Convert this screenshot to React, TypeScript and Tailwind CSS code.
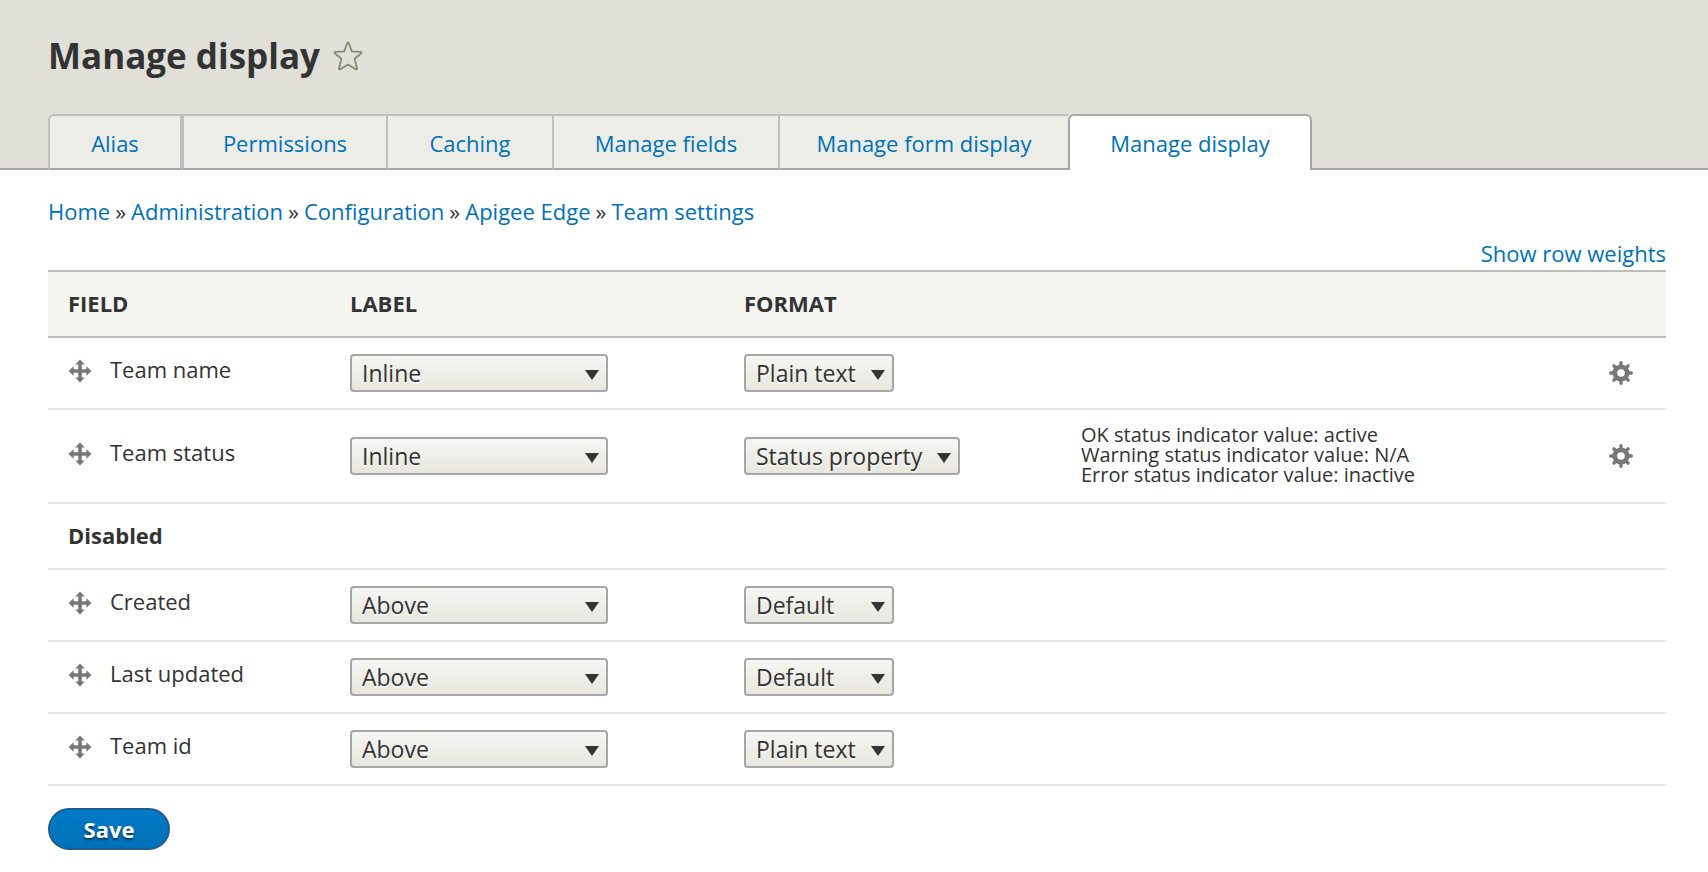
import React, { useState } from 'react';
import clsx from 'clsx';

type Row = {
  id: string;
  name: string;
  label: string;
  format: string;
  wide?: boolean;
  summary?: string[];
  configurable?: boolean;
};

const tabs = [
  { name: 'Alias', className: 'w-[134px] rounded-tl-md border-x-2' },
  { name: 'Permissions', className: 'w-[206px] border-x-2' },
  { name: 'Caching', className: 'w-[166px] border-r-2' },
  { name: 'Manage fields', className: 'w-[226px] border-r-2' },
  { name: 'Manage form display', className: 'w-[288px]' },
];

const crumbs = ['Home', 'Administration', 'Configuration', 'Apigee Edge', 'Team settings'];

const labelOptions = ['Above', 'Inline', 'Hidden', 'Visually Hidden'];
const formatOptions = ['Default', 'Plain text', 'Status property'];

const enabledRows: Row[] = [
  { id: 'name', name: 'Team name', label: 'Inline', format: 'Plain text', configurable: true },
  {
    id: 'status',
    name: 'Team status',
    label: 'Inline',
    format: 'Status property',
    wide: true,
    configurable: true,
    summary: [
      'OK status indicator value: active',
      'Warning status indicator value: N/A',
      'Error status indicator value: inactive',
    ],
  },
];

const disabledRows: Row[] = [
  { id: 'created', name: 'Created', label: 'Above', format: 'Default' },
  { id: 'changed', name: 'Last updated', label: 'Above', format: 'Default' },
  { id: 'team-id', name: 'Team id', label: 'Above', format: 'Plain text' },
];

const linkClass = 'text-[#0071b8] hover:underline';

const StarIcon = () => (
  <svg viewBox="0 0 30 30" className="size-[30px]" fill="none" stroke="#8a8774" strokeWidth="1.8" strokeLinejoin="round" aria-hidden="true">
    <path d="M14.2 2.2Q15 .6 15.8 2.2L18.8 10.4 27.6 10.9Q29.2 11.2 28.1 12.4L21.6 17.8 23.9 27.2Q24 29 22.5 28.3L15 23.6 7.5 28.3Q6 29 6.1 27.2L8.4 17.8 1.9 12.4Q.8 11.2 2.4 10.9L11.2 10.4Z" />
  </svg>
);

const MoveIcon = () => (
  <svg viewBox="0 0 24 24" className="size-6" fill="#787878" aria-hidden="true">
    <path d="M12 .5 16.8 5.6H13.8V10.2H18.4V7.2L23.5 12 18.4 16.8V13.8H13.8V18.4H16.8L12 23.5 7.2 18.4H10.2V13.8H5.6V16.8L.5 12 5.6 7.2V10.2H10.2V5.6H7.2Z" />
  </svg>
);

const GearIcon = () => (
  <svg viewBox="0 0 24 24" className="size-6" aria-hidden="true">
    <g stroke="#787878" strokeWidth="3.4" strokeLinecap="round">
      <path d="M12 1.7V5M12 19V22.3M1.7 12H5M19 12H22.3M4.9 4.9 7 7M17 17 19.1 19.1M4.9 19.1 7 17M17 7 19.1 4.9" />
    </g>
    <circle cx="12" cy="12" r="6.2" fill="none" stroke="#787878" strokeWidth="4.8" />
  </svg>
);

type SelectProps = {
  id: string;
  title: string;
  initial: string;
  options: string[];
  className: string;
};

const Select: React.FC<SelectProps> = ({ id, title, initial, options, className }) => {
  const [value, setValue] = useState(initial);

  return (
    <div className={clsx('relative max-w-full', className)}>
      <select
        id={id}
        aria-label={title}
        value={value}
        onChange={(e) => setValue(e.target.value)}
        className="block h-[38px] w-full appearance-none rounded border-2 border-[#a6a6a6] bg-linear-to-b from-[#f6f6f3] to-[#e7e7df] pl-[10px] pr-6 text-[23px] leading-[34px] text-[#333] [text-shadow:0_2px_rgba(255,255,255,0.6)]"
      >
        {options.map((option) => (
          <option key={option}>{option}</option>
        ))}
      </select>
      <svg viewBox="0 0 14 10" className="pointer-events-none absolute right-[9px] top-4 h-[10px] w-[14px]" fill="#333" aria-hidden="true">
        <path d="M0 0H14L7 10Z" />
      </svg>
    </div>
  );
};

const FieldRow: React.FC<{ row: Row }> = ({ row }) => (
  <tr className="border-b-2 border-[#e6e5df]">
    <td className="px-5 py-4">
      <div className="flex items-center gap-[18px] pb-1">
        <a href="#" title="Drag to re-order" className="cursor-move">
          <MoveIcon />
        </a>
        <span className="pb-1 leading-[30px]">{row.name}</span>
      </div>
    </td>
    <td className="px-5 py-4">
      <Select
        id={`${row.id}-label`}
        title={`Label display for ${row.name}`}
        initial={row.label}
        options={labelOptions}
        className="w-[258px]"
      />
    </td>
    <td className="px-5 py-4">
      <Select
        id={`${row.id}-format`}
        title={`Plugin for ${row.name}`}
        initial={row.format}
        options={formatOptions}
        className={row.wide ? 'w-[216px]' : 'w-[150px]'}
      />
    </td>
    <td className="px-5 pt-[15px] pb-[17px] text-[20px] leading-5 whitespace-pre-line">
      {row.summary?.join('\n')}
    </td>
    <td className="py-4 pr-[33px]">
      {row.configurable && (
        <button type="button" aria-label={`Edit ${row.name}`} className="ml-auto block cursor-pointer">
          <GearIcon />
        </button>
      )}
    </td>
  </tr>
);

export default function App() {
  const [starred, setStarred] = useState(false);

  return (
    <div className="min-h-screen bg-white font-['Open_Sans','Noto_Sans',sans-serif] text-[22px] text-[#333]">
      <header className="bg-[#e0e0d8] pt-8">
        <div className="flex items-center gap-[13px] px-12 pb-[34px]">
          <h1 className="text-[35px] font-bold leading-[48px]">Manage display</h1>
          <button
            type="button"
            aria-label="Add to shortcuts"
            aria-pressed={starred}
            onClick={() => setStarred(!starred)}
            className="cursor-pointer"
          >
            <StarIcon />
          </button>
        </div>

        <nav aria-label="Primary tabs" className="flex h-14 leading-[54px]">
          <div className="w-12 border-b-2 border-[#a6a6a6]" />
          {tabs.map((tab) => (
            <a
              key={tab.name}
              href="#"
              className={clsx(
                'border-t-2 border-b-2 border-[#bfbfbf] border-b-[#a6a6a6] bg-[#edede8] text-center',
                linkClass,
                tab.className,
              )}
            >
              {tab.name}
            </a>
          ))}
          <a
            href="#"
            aria-current="page"
            className={clsx('w-[244px] rounded-t-md border-2 border-b-0 border-[#a6a6a6] bg-white text-center', linkClass)}
          >
            Manage display
          </a>
          <div className="flex-1 border-b-2 border-[#a6a6a6]" />
        </nav>
      </header>

      <main className="pl-12 pr-[42px] pt-[26px]">
        <nav aria-label="Breadcrumb">
          <ol className="flex leading-[30px]">
            {crumbs.map((crumb, i) => (
              <li key={crumb}>
                {i > 0 && <span className="px-[5px]">»</span>}
                <a href="#" className={linkClass}>{crumb}</a>
              </li>
            ))}
          </ol>
        </nav>

        <form onSubmit={(e) => e.preventDefault()}>
          <div className="flex justify-end pt-3 pb-[2px]">
            <button type="button" className={clsx('cursor-pointer leading-[30px]', linkClass)}>
              Show row weights
            </button>
          </div>

          <table className="w-full table-fixed border-collapse text-left">
            <colgroup>
              <col className="w-[282px]" />
              <col className="w-[394px]" />
              <col className="w-[337px]" />
              <col />
              <col className="w-[120px]" />
            </colgroup>
            <thead>
              <tr className="h-[66px] border-y-2 border-[#bfbfba] bg-[#f5f5f2] uppercase">
                <th className="px-5 pb-[2px] font-bold">Field</th>
                <th className="px-5 pb-[2px] font-bold">Label</th>
                <th className="px-5 pb-[2px] font-bold">Format</th>
                <th />
                <th />
              </tr>
            </thead>
            <tbody>
              {enabledRows.map((row) => <FieldRow key={row.id} row={row} />)}
              <tr className="h-[66px] border-b-2 border-[#e6e5df]">
                <th colSpan={5} scope="rowgroup" className="px-5 pb-[2px] font-bold">Disabled</th>
              </tr>
              {disabledRows.map((row) => <FieldRow key={row.id} row={row} />)}
            </tbody>
          </table>

          <button
            type="submit"
            className="mt-[22px] mb-5 h-[42px] w-[122px] cursor-pointer rounded-full border-2 border-[#1e5c90] bg-linear-to-b from-[#007bc6] to-[#0071b8] font-bold leading-[38px] text-white [text-shadow:0_2px_2px_rgba(0,0,0,0.5)]"
          >
            Save
          </button>
        </form>
      </main>
    </div>
  );
}
